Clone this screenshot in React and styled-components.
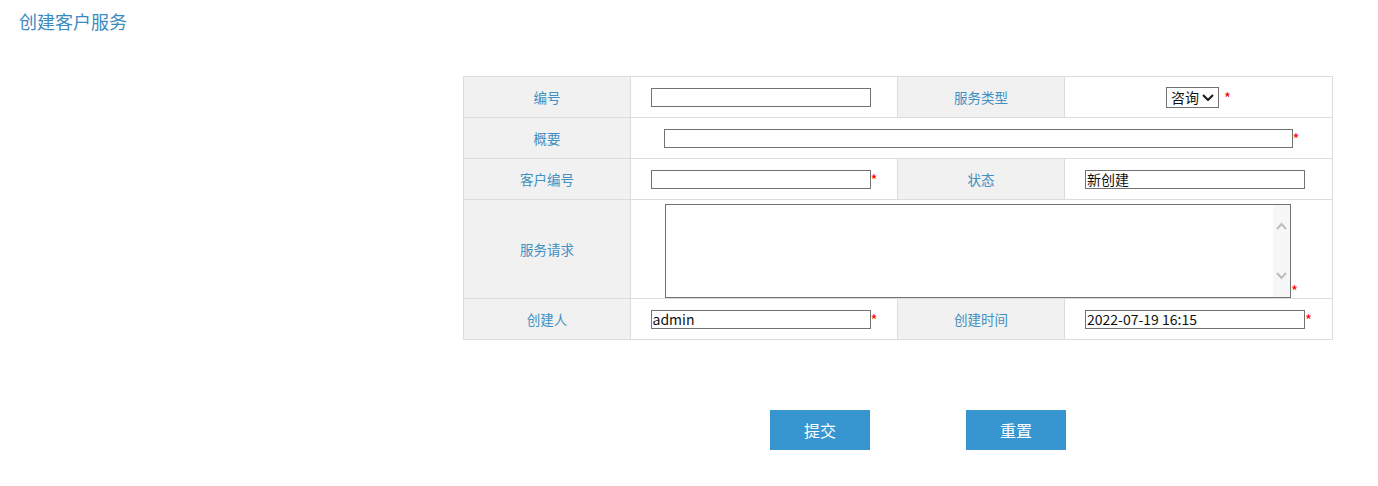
import React from 'react';
import styled, { createGlobalStyle } from 'styled-components';

const GlobalStyle = createGlobalStyle`
  html, body {
    margin: 0;
    padding: 0;
    background: #fff;
    font-family: "Noto Sans CJK SC", "Liberation Sans", sans-serif;
  }
`;

const Page = styled.div`
  width: 1378px;
  height: 486px;
  box-sizing: border-box;
  padding: 9px 0 0 0;
`;

const Title = styled.h2`
  margin: 0 0 0 19px;
  height: 24px;
  line-height: 24px;
  font-size: 18px;
  font-weight: normal;
  color: #3a8bc2;
`;

const FormArea = styled.div`
  padding: 43px 0 0 463px;
`;

const FormTable = styled.table`
  width: 869px;
  border-collapse: collapse;
  table-layout: fixed;
  font-size: 14px;
`;

const Label = styled.td`
  height: ${(p) => (p.$tall ? 98 : 40)}px;
  padding: 0;
  background: #f1f1f1;
  border: 1px solid #dcdcdc;
  color: #4190c2;
  text-align: center;
  vertical-align: middle;
  font-size: 13.5px;
`;

const Value = styled.td`
  padding: ${(p) => (p.$tall ? '4px 0 0' : '0')};
  border: 1px solid #dcdcdc;
  text-align: center;
  vertical-align: middle;
  white-space: nowrap;
  line-height: 1;
`;

const TextInput = styled.input`
  box-sizing: border-box;
  width: ${(p) => p.$w || 220}px;
  height: 19px;
  margin: 0;
  padding: 0 1px;
  border: 1px solid #727272;
  font-family: "Noto Sans CJK SC", "Liberation Sans", sans-serif;
  font-size: 14px;
  color: #111;
  vertical-align: middle;
  outline: none;
`;

const SelectWrap = styled.span`
  position: relative;
  display: inline-block;
  vertical-align: middle;
  line-height: 0;
`;

const Select = styled.select`
  box-sizing: border-box;
  width: 53px;
  height: 21px;
  margin: 0;
  padding: 0 0 0 4px;
  border: 1px solid #727272;
  border-radius: 0;
  background: #fff;
  appearance: none;
  font-family: "Noto Sans CJK SC", "Liberation Sans", sans-serif;
  font-size: 14px;
  line-height: 19px;
  color: #111;
  outline: none;
`;

const Chevron = styled.svg`
  position: absolute;
  top: 7px;
  right: 5px;
  pointer-events: none;
`;

const AreaWrap = styled.span`
  position: relative;
  display: inline-block;
  vertical-align: bottom;
  line-height: 0;
`;

const TextArea = styled.textarea`
  box-sizing: border-box;
  width: 626px;
  height: 94px;
  margin: 0;
  padding: 2px 20px 2px 2px;
  border: 1px solid #727272;
  resize: none;
  font-family: "Noto Sans CJK SC", "Liberation Sans", sans-serif;
  font-size: 14px;
  outline: none;
`;

const ScrollTrack = styled.span`
  position: absolute;
  top: 1px;
  right: 1px;
  bottom: 1px;
  width: 17px;
  background: #f7f7f7;
  pointer-events: none;
`;

const ScrollArrow = styled.svg`
  position: absolute;
  left: 3px;
  ${(p) => (p.$down ? 'bottom: 17px;' : 'top: 17px;')}
`;

const Star = styled.span`
  display: inline-block;
  width: 7px;
  margin-left: ${(p) => (p.$gap ? 5 : 0)}px;
  color: #f00;
  font-size: 15px;
  text-align: left;
  vertical-align: middle;
  visibility: ${(p) => (p.$hidden ? 'hidden' : 'visible')};
`;

const AreaStar = styled(Star)`
  vertical-align: bottom;
  line-height: 14px;
`;

const ButtonRow = styled.div`
  display: flex;
  gap: 96px;
  padding: 70px 0 0 770px;
`;

const Button = styled.button`
  width: 100px;
  height: 40px;
  border: none;
  background: #3796cf;
  color: #fff;
  font-family: "Noto Sans CJK SC", "Liberation Sans", sans-serif;
  font-size: 16px;
  cursor: pointer;
`;

export default function App() {
  return (
    <Page>
      <GlobalStyle />
      <Title>创建客户服务</Title>
      <FormArea>
        <FormTable>
          <colgroup>
            <col style={{ width: 167 }} />
            <col style={{ width: 267 }} />
            <col style={{ width: 167 }} />
            <col style={{ width: 268 }} />
          </colgroup>
          <tbody>
            <tr>
              <Label>编号</Label>
              <Value>
                <TextInput type="text" />
                <Star $hidden>*</Star>
              </Value>
              <Label>服务类型</Label>
              <Value>
                <SelectWrap>
                  <Select defaultValue="咨询">
                    <option>咨询</option>
                    <option>建议</option>
                    <option>投诉</option>
                  </Select>
                  <Chevron width="12" height="7" viewBox="0 0 12 7">
                    <path d="M1 1 L6 6 L11 1" fill="none" stroke="#1a1a1a" strokeWidth="2" />
                  </Chevron>
                </SelectWrap>
                <Star $gap>*</Star>
              </Value>
            </tr>
            <tr>
              <Label>概要</Label>
              <Value colSpan={3}>
                <TextInput type="text" $w={629} />
                <Star>*</Star>
              </Value>
            </tr>
            <tr>
              <Label>客户编号</Label>
              <Value>
                <TextInput type="text" />
                <Star>*</Star>
              </Value>
              <Label>状态</Label>
              <Value>
                <TextInput type="text" defaultValue="新创建" readOnly />
                <Star $hidden>*</Star>
              </Value>
            </tr>
            <tr>
              <Label $tall>服务请求</Label>
              <Value colSpan={3} $tall>
                <AreaWrap>
                  <TextArea />
                  <ScrollTrack>
                    <ScrollArrow width="11" height="8" viewBox="0 0 11 8">
                      <path d="M1 7 L5.5 2 L10 7" fill="none" stroke="#bdbdbd" strokeWidth="2" />
                    </ScrollArrow>
                    <ScrollArrow $down width="11" height="8" viewBox="0 0 11 8">
                      <path d="M1 1 L5.5 6 L10 1" fill="none" stroke="#bdbdbd" strokeWidth="2" />
                    </ScrollArrow>
                  </ScrollTrack>
                </AreaWrap>
                <AreaStar>*</AreaStar>
              </Value>
            </tr>
            <tr>
              <Label>创建人</Label>
              <Value>
                <TextInput type="text" defaultValue="admin" />
                <Star>*</Star>
              </Value>
              <Label>创建时间</Label>
              <Value>
                <TextInput type="text" defaultValue="2022-07-19 16:15" />
                <Star>*</Star>
              </Value>
            </tr>
          </tbody>
        </FormTable>
      </FormArea>
      <ButtonRow>
        <Button type="button">提交</Button>
        <Button type="button">重置</Button>
      </ButtonRow>
    </Page>
  );
}
